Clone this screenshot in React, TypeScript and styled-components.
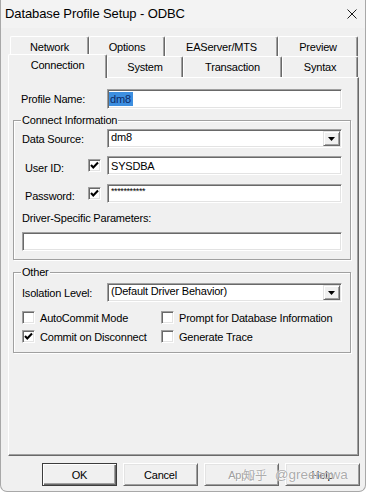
import styled, { createGlobalStyle } from "styled-components";

const GlobalStyle = createGlobalStyle`
  html, body {
    margin: 0;
    padding: 0;
    background: #ffffff;
  }
  body {
    font-family: "Liberation Sans", Arial, sans-serif;
  }
`;

const topTabs = [
  { label: "Network", w: 79 },
  { label: "Options", w: 76 },
  { label: "EAServer/MTS", w: 113 },
  { label: "Preview", w: 80 },
];

const bottomTabs = [
  { label: "Connection", w: 99, active: true },
  { label: "System", w: 76 },
  { label: "Transaction", w: 99 },
  { label: "Syntax", w: 76 },
];

const CheckMark = () => (
  <svg width="11" height="11" viewBox="0 0 11 11">
    <polyline
      points="2,5 4.3,7.4 9,2.6"
      fill="none"
      stroke="#000"
      strokeWidth="2.1"
    />
  </svg>
);

const CheckBox = ({ checked }: { checked?: boolean }) => (
  <Box>{checked && <CheckMark />}</Box>
);

const ComboBox = ({ value }: { value: string }) => (
  <Combo>
    <FieldText>{value}</FieldText>
    <DropButton>
      <svg width="7" height="4" viewBox="0 0 7 4">
        <polygon points="0,0 7,0 3.5,4" fill="#000" />
      </svg>
    </DropButton>
  </Combo>
);

const App = () => {
  return (
    <>
      <GlobalStyle />
      <Window>
        <TitleBar>
          <Title>Database Profile Setup - ODBC</Title>
          <svg width="10" height="10" viewBox="0 0 10 10" style={{ marginTop: 2 }}>
            <path d="M0.5 0.5 L9.5 9.5 M9.5 0.5 L0.5 9.5" stroke="#1a1a1a" strokeWidth="1" />
          </svg>
        </TitleBar>

        <TabStrip>
          <TabRow $indent={9} $h={20}>
            {topTabs.map((t) => (
              <Tab key={t.label} $w={t.w}>
                {t.label}
              </Tab>
            ))}
          </TabRow>
          <TabRow $indent={7} $h={21}>
            {bottomTabs.map((t) => (
              <Tab key={t.label} $w={t.w} $active={t.active}>
                {t.label}
              </Tab>
            ))}
          </TabRow>
        </TabStrip>

        <Panel>
          <ProfileRow>
            <Label $w={86}>Profile Name:</Label>
            <TextBox $w={235} $h={20}>
              <Selected>dm8</Selected>
            </TextBox>
          </ProfileRow>

          <Group $pt={2} $pb={8} $mt={5}>
            <Legend>Connect Information</Legend>
            <Row>
              <Label $w={86} $indent={1}>
                Data Source:
              </Label>
              <ComboBox value="dm8" />
            </Row>
            <Row $mt={8}>
              <Label $w={67} $indent={4} $dy={2}>
                User ID:
              </Label>
              <CheckBox checked />
              <TextBox $h={19} $ml={6}>
                <FieldText>SYSDBA</FieldText>
              </TextBox>
            </Row>
            <Row $mt={9}>
              <Label $w={67} $indent={4} $dy={2}>
                Password:
              </Label>
              <CheckBox checked />
              <TextBox $h={19} $ml={6}>
                <Masked>***********</Masked>
              </TextBox>
            </Row>
            <Caption>Driver-Specific Parameters:</Caption>
            <TextBox $h={19} $ml={1} $mt={7} />
          </Group>

          <Group $pt={4} $pb={9} $mt={6}>
            <Legend>Other</Legend>
            <Row>
              <Label $w={86} $indent={1}>
                Isolation Level:
              </Label>
              <ComboBox value="(Default Driver Behavior)" />
            </Row>
            <CheckGrid>
              <CheckItem>
                <CheckBox />
                AutoCommit Mode
              </CheckItem>
              <CheckItem>
                <CheckBox />
                Prompt for Database Information
              </CheckItem>
              <CheckItem>
                <CheckBox checked />
                Commit on Disconnect
              </CheckItem>
              <CheckItem>
                <CheckBox />
                Generate Trace
              </CheckItem>
            </CheckGrid>
          </Group>
        </Panel>

        <ButtonBar>
          <Button $isDefault>OK</Button>
          <Button>Cancel</Button>
          <Button $disabled>Apply</Button>
          <Button>Help</Button>
          <Watermark>
            <WatermarkCjk>知乎</WatermarkCjk> @greenowa
          </Watermark>
        </ButtonBar>
      </Window>
    </>
  );
};

const Window = styled.div`
  box-sizing: border-box;
  width: 366px;
  height: 492px;
  background: #f0f0f0;
  border: 1px solid #a8a8a8;
  border-top: none;
  border-radius: 0 0 7px 7px;
  display: flex;
  flex-direction: column;
  font-size: 11px;
  letter-spacing: -0.2px;
  color: #000;
  overflow: hidden;
`;

const TitleBar = styled.div`
  box-sizing: border-box;
  height: 28px;
  flex-shrink: 0;
  display: flex;
  align-items: center;
  justify-content: space-between;
  padding: 0 8px 2px 4px;
  background: #f3f3f3;
`;

const Title = styled.span`
  font-size: 13px;
  letter-spacing: -0.1px;
  color: #000;
`;

const TabStrip = styled.div`
  margin-top: 8px;
  display: flex;
  flex-direction: column;
`;

const TabRow = styled.div<{ $indent: number; $h: number }>`
  display: flex;
  height: ${(p) => p.$h}px;
  padding-left: ${(p) => p.$indent}px;
`;

const Tab = styled.div<{ $w: number; $active?: boolean }>`
  box-sizing: border-box;
  width: ${(p) => p.$w}px;
  height: ${(p) => (p.$active ? "24px" : "100%")};
  margin-top: ${(p) => (p.$active ? "-2px" : "0")};
  padding-bottom: ${(p) => (p.$active ? "3px" : "0")};
  display: flex;
  align-items: center;
  justify-content: center;
  background: #f0f0f0;
  border-top: 1px solid #ffffff;
  border-left: 1px solid #ffffff;
  border-right: 1px solid #696969;
  border-radius: 2px 2px 0 0;
  box-shadow: inset -1px 0 0 #a0a0a0;
  position: ${(p) => (p.$active ? "relative" : "static")};
  z-index: ${(p) => (p.$active ? 1 : "auto")};
  flex-shrink: 0;
`;

const Panel = styled.div`
  box-sizing: border-box;
  margin-left: 7px;
  width: 351px;
  height: 379px;
  border-top: 1px solid #ffffff;
  border-left: 1px solid #ffffff;
  border-right: 1px solid #696969;
  border-bottom: 1px solid #696969;
  box-shadow: inset -1px -1px 0 #a0a0a0;
  padding: 11px 7px 0 4px;
  display: flex;
  flex-direction: column;
`;

const ProfileRow = styled.div`
  display: flex;
  align-items: center;
  padding-left: 8px;
`;

const Row = styled.div<{ $mt?: number }>`
  display: flex;
  align-items: center;
  margin-top: ${(p) => p.$mt ?? 0}px;
`;

const Label = styled.span<{ $w: number; $indent?: number; $dy?: number }>`
  box-sizing: border-box;
  width: ${(p) => p.$w}px;
  padding-left: ${(p) => p.$indent ?? 0}px;
  padding-top: ${(p) => (p.$dy ?? 0) * 2}px;
  flex-shrink: 0;
  white-space: nowrap;
`;

const Caption = styled.div`
  margin-top: 9px;
  padding-left: 1px;
  line-height: 13px;
`;

const Group = styled.fieldset<{ $pt: number; $pb: number; $mt: number }>`
  box-sizing: border-box;
  width: 338px;
  min-width: 0;
  margin: ${(p) => p.$mt}px 0 0 0;
  padding: ${(p) => p.$pt}px 8px ${(p) => p.$pb}px 7px;
  border: 1px solid #a0a0a0;
  box-shadow: inset 1px 1px 0 #ffffff, 1px 1px 0 #ffffff;
`;

const Legend = styled.legend`
  padding: 0 1px;
  line-height: 13px;
  font-size: 11px;
  background: #f0f0f0;
`;

const sunken = `
  box-sizing: border-box;
  background: #ffffff;
  border: 1px solid;
  border-color: #a0a0a0 #ffffff #ffffff #a0a0a0;
  box-shadow: inset 1px 1px 0 #696969, inset -1px -1px 0 #e3e3e3;
`;

const TextBox = styled.div<{ $w?: number; $h: number; $ml?: number; $mt?: number }>`
  ${sunken}
  height: ${(p) => p.$h}px;
  ${(p) => (p.$w ? `width: ${p.$w}px;` : "flex: 1;")}
  margin-left: ${(p) => p.$ml ?? 0}px;
  margin-top: ${(p) => p.$mt ?? 0}px;
  display: flex;
  align-items: center;
  padding-left: 1px;
`;

const FieldText = styled.span`
  flex: 1;
  padding-left: 2px;
  white-space: nowrap;
  overflow: hidden;
`;

const Masked = styled.span`
  align-self: flex-start;
  padding: 2px 0 0 2px;
  font-size: 9px;
  letter-spacing: -0.4px;
  line-height: 9px;
`;

const Selected = styled.span`
  display: inline-block;
  line-height: 14px;
  padding: 0 2px 0 1px;
  background: #3d8fe0;
  color: #0d2a66;
`;

const Combo = styled.div`
  ${sunken}
  flex: 1;
  height: 19px;
  display: flex;
  align-items: stretch;
  padding: 1px 1px 1px 1px;
`;

const DropButton = styled.div`
  box-sizing: border-box;
  width: 17px;
  display: flex;
  align-items: center;
  justify-content: center;
  background: #f0f0f0;
  border: 1px solid;
  border-color: #e3e3e3 #696969 #696969 #e3e3e3;
  box-shadow: inset 1px 1px 0 #ffffff, inset -1px -1px 0 #a0a0a0;
`;

const Box = styled.span`
  ${sunken}
  width: 13px;
  height: 13px;
  flex-shrink: 0;
  display: flex;
  align-items: center;
  justify-content: center;
`;

const CheckGrid = styled.div`
  display: grid;
  grid-template-columns: 139px 1fr;
  row-gap: 6px;
  margin-top: 9px;
  padding-left: 1px;
`;

const CheckItem = styled.label`
  display: flex;
  align-items: center;
  gap: 5px;
  white-space: nowrap;
`;

const ButtonBar = styled.div`
  position: relative;
  display: flex;
  gap: 6px;
  margin-top: 7px;
  padding-left: 41px;
`;

const Button = styled.div<{ $isDefault?: boolean; $disabled?: boolean }>`
  box-sizing: border-box;
  width: 75px;
  height: 23px;
  display: flex;
  align-items: center;
  justify-content: center;
  background: #f0f0f0;
  border: 1px solid;
  border-color: ${(p) =>
    p.$isDefault ? "#3c3c3c" : "#ffffff #696969 #696969 #ffffff"};
  box-shadow: ${(p) =>
    p.$isDefault
      ? "inset 1px 1px 0 #ffffff, inset -1px -1px 0 #696969, inset -2px -2px 0 #a0a0a0"
      : "inset 1px 1px 0 #e3e3e3, inset -1px -1px 0 #a0a0a0"};
  color: ${(p) => (p.$disabled ? "#a0a0a0" : "#000")};
  text-shadow: ${(p) => (p.$disabled ? "1px 1px 0 #ffffff" : "none")};
`;

const Watermark = styled.div`
  position: absolute;
  left: 242px;
  top: 0;
  height: 23px;
  display: flex;
  align-items: center;
  gap: 0;
  font-size: 13.5px;
  letter-spacing: 0;
  color: rgba(150, 150, 150, 0.8);
  text-shadow: 0 0 1px #ffffff, 0 0 2px #ffffff;
  white-space: pre;
  pointer-events: none;
`;

const WatermarkCjk = styled.span`
  font-family: "Noto Sans CJK SC", sans-serif;
  font-size: 12px;
  margin-right: 4px;
`;

export default App;
